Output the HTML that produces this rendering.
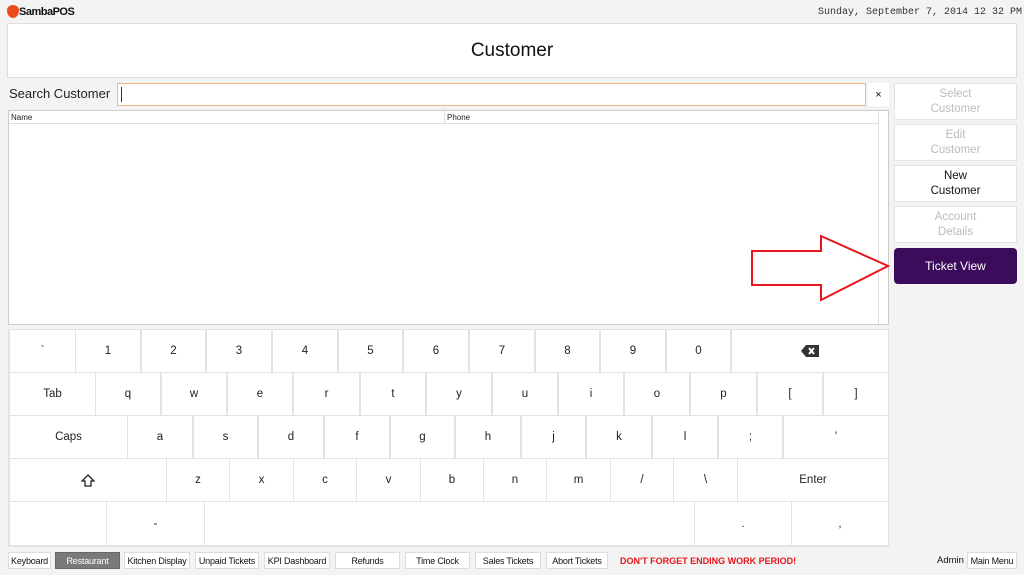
<!DOCTYPE html>
<html><head><meta charset="utf-8"><style>
*{box-sizing:border-box;margin:0;padding:0}
body{width:1024px;height:575px;background:#f3f3f3;font-family:"Liberation Sans",sans-serif;position:relative;overflow:hidden;color:#111}
.a{position:absolute}
.k{position:absolute;background:#fff;display:flex;align-items:center;justify-content:center;font-size:11.5px;color:#222}
.sb{position:absolute;left:894px;width:123px;height:37px;background:#fff;border:1px solid #e2e2e2;font-size:11.5px;color:#bbb;text-align:center;line-height:15px;padding-top:3px}
.bb{position:absolute;top:552px;height:17px;background:#fff;border:1px solid #ddd;font-size:9px;display:flex;align-items:center;justify-content:center;color:#111;white-space:nowrap;overflow:hidden;letter-spacing:-0.2px}
</style></head><body>
<div class="a" style="left:7px;top:5px;width:12px;height:13px;background:#ee4b1c;border-radius:50% 50% 50% 50%/40% 40% 60% 60%"></div>
<div class="a" style="left:19px;top:6px;font-size:11px;font-weight:bold;letter-spacing:-0.5px">SambaPOS</div>
<div class="a" style="left:818px;top:7px;font-family:'Liberation Mono',monospace;font-size:10px;color:#333">Sunday, September 7, 2014 12 32 PM</div>
<div class="a" style="left:7px;top:23px;width:1010px;height:55px;background:#fff;border:1px solid #ddd;display:flex;align-items:center;justify-content:center;font-size:19px">Customer</div>
<div class="a" style="left:9px;top:86px;font-size:13px;color:#222">Search Customer</div>
<div class="a" style="left:117px;top:83px;width:749px;height:23px;background:#fff;border:1px solid #f0b87a"><div class="a" style="left:3px;top:3px;width:1px;height:15px;background:#333"></div></div>
<div class="a" style="left:868px;top:83px;width:21px;height:23px;background:#fff;font-size:11px;display:flex;align-items:center;justify-content:center">×</div>
<div class="a" style="left:8px;top:110px;width:881px;height:215px;background:#fff;border:1px solid #ccc"></div>
<div class="a" style="left:9px;top:111px;width:869px;height:13px;border-bottom:1px solid #ddd;font-size:8px;padding:2px 2px;color:#222">Name</div>
<div class="a" style="left:444px;top:111px;width:1px;height:13px;background:#ddd"></div>
<div class="a" style="left:447px;top:113px;font-size:8px;color:#222">Phone</div>
<div class="a" style="left:878px;top:111px;width:1px;height:213px;background:#ddd"></div>
<div class="sb" style="top:83px">Select<br>Customer</div>
<div class="sb" style="top:124px">Edit<br>Customer</div>
<div class="sb" style="top:165px;color:#111">New<br>Customer</div>
<div class="sb" style="top:206px">Account<br>Details</div>
<div class="a" style="left:894px;top:248px;width:123px;height:36px;background:#3b0b5c;border-radius:4px;color:#fff;font-size:12px;display:flex;align-items:center;justify-content:center">Ticket View</div>
<svg class="a" style="left:0;top:0" width="1024" height="575"><polygon points="752,251 821,251 821,236 888,266 821,300 821,285 752,285" fill="#fff" stroke="#e8161b" stroke-width="2"/></svg>
<div class="a" style="left:8px;top:329px;width:881px;height:218px;background:#e3e3e3"></div>
<div class="bb" style="left:8px;width:43px">Keyboard</div>
<div class="bb" style="left:55px;width:65px;background:#7a7a7a;border-color:#666;color:#fff">Restaurant</div>
<div class="bb" style="left:124px;width:66px">Kitchen Display</div>
<div class="bb" style="left:195px;width:64px">Unpaid Tickets</div>
<div class="bb" style="left:264px;width:66px">KPI Dashboard</div>
<div class="bb" style="left:335px;width:65px">Refunds</div>
<div class="bb" style="left:405px;width:65px">Time Clock</div>
<div class="bb" style="left:475px;width:66px">Sales Tickets</div>
<div class="bb" style="left:546px;width:62px">Abort Tickets</div>
<div class="a" style="left:620px;top:556px;font-size:9px;font-weight:bold;color:#e8161b">DON'T FORGET ENDING WORK PERIOD!</div>
<div class="a" style="left:937px;top:555px;font-size:9.5px">Admin</div>
<div class="bb" style="left:967px;width:50px">Main Menu</div>
<div class="k" style="left:10px;top:330px;width:65px;height:42px">`</div>
<div class="k" style="left:76px;top:330px;width:64px;height:42px">1</div>
<div class="k" style="left:142px;top:330px;width:63px;height:42px">2</div>
<div class="k" style="left:207px;top:330px;width:64px;height:42px">3</div>
<div class="k" style="left:273px;top:330px;width:64px;height:42px">4</div>
<div class="k" style="left:339px;top:330px;width:63px;height:42px">5</div>
<div class="k" style="left:404px;top:330px;width:64px;height:42px">6</div>
<div class="k" style="left:470px;top:330px;width:64px;height:42px">7</div>
<div class="k" style="left:536px;top:330px;width:63px;height:42px">8</div>
<div class="k" style="left:601px;top:330px;width:64px;height:42px">9</div>
<div class="k" style="left:667px;top:330px;width:63px;height:42px">0</div>
<div class="k" style="left:732px;top:330px;width:156px;height:42px"><svg width="18" height="12" viewBox="0 0 18 12"><path d="M5 0H18V12H5L0 6Z" fill="#333"/><path d="M8 3L13 9M13 3L8 9" stroke="#fff" stroke-width="2"/></svg></div>
<div class="k" style="left:10px;top:373px;width:85px;height:42px">Tab</div>
<div class="k" style="left:96px;top:373px;width:64px;height:42px">q</div>
<div class="k" style="left:162px;top:373px;width:64px;height:42px">w</div>
<div class="k" style="left:228px;top:373px;width:64px;height:42px">e</div>
<div class="k" style="left:294px;top:373px;width:65px;height:42px">r</div>
<div class="k" style="left:361px;top:373px;width:64px;height:42px">t</div>
<div class="k" style="left:427px;top:373px;width:64px;height:42px">y</div>
<div class="k" style="left:493px;top:373px;width:64px;height:42px">u</div>
<div class="k" style="left:559px;top:373px;width:64px;height:42px">i</div>
<div class="k" style="left:625px;top:373px;width:64px;height:42px">o</div>
<div class="k" style="left:691px;top:373px;width:65px;height:42px">p</div>
<div class="k" style="left:758px;top:373px;width:64px;height:42px">[</div>
<div class="k" style="left:824px;top:373px;width:64px;height:42px">]</div>
<div class="k" style="left:10px;top:416px;width:117px;height:42px">Caps</div>
<div class="k" style="left:128px;top:416px;width:64px;height:42px">a</div>
<div class="k" style="left:194px;top:416px;width:63px;height:42px">s</div>
<div class="k" style="left:259px;top:416px;width:64px;height:42px">d</div>
<div class="k" style="left:325px;top:416px;width:64px;height:42px">f</div>
<div class="k" style="left:391px;top:416px;width:63px;height:42px">g</div>
<div class="k" style="left:456px;top:416px;width:64px;height:42px">h</div>
<div class="k" style="left:522px;top:416px;width:63px;height:42px">j</div>
<div class="k" style="left:587px;top:416px;width:64px;height:42px">k</div>
<div class="k" style="left:653px;top:416px;width:64px;height:42px">l</div>
<div class="k" style="left:719px;top:416px;width:63px;height:42px">;</div>
<div class="k" style="left:784px;top:416px;width:104px;height:42px">'</div>
<div class="k" style="left:10px;top:459px;width:156px;height:42px"><svg width="14" height="13" viewBox="0 0 14 13"><path d="M7 1L13 7H10V12H4V7H1Z" fill="none" stroke="#222" stroke-width="1.3"/></svg></div>
<div class="k" style="left:167px;top:459px;width:62px;height:42px">z</div>
<div class="k" style="left:230px;top:459px;width:63px;height:42px">x</div>
<div class="k" style="left:294px;top:459px;width:62px;height:42px">c</div>
<div class="k" style="left:357px;top:459px;width:63px;height:42px">v</div>
<div class="k" style="left:421px;top:459px;width:62px;height:42px">b</div>
<div class="k" style="left:484px;top:459px;width:62px;height:42px">n</div>
<div class="k" style="left:547px;top:459px;width:63px;height:42px">m</div>
<div class="k" style="left:611px;top:459px;width:62px;height:42px">/</div>
<div class="k" style="left:674px;top:459px;width:63px;height:42px">\</div>
<div class="k" style="left:738px;top:459px;width:150px;height:42px">Enter</div>
<div class="k" style="left:10px;top:502px;width:96px;height:43px"></div>
<div class="k" style="left:107px;top:502px;width:97px;height:43px">-</div>
<div class="k" style="left:205px;top:502px;width:489px;height:43px"></div>
<div class="k" style="left:695px;top:502px;width:96px;height:43px">.</div>
<div class="k" style="left:792px;top:502px;width:96px;height:43px">,</div>
</body></html>
